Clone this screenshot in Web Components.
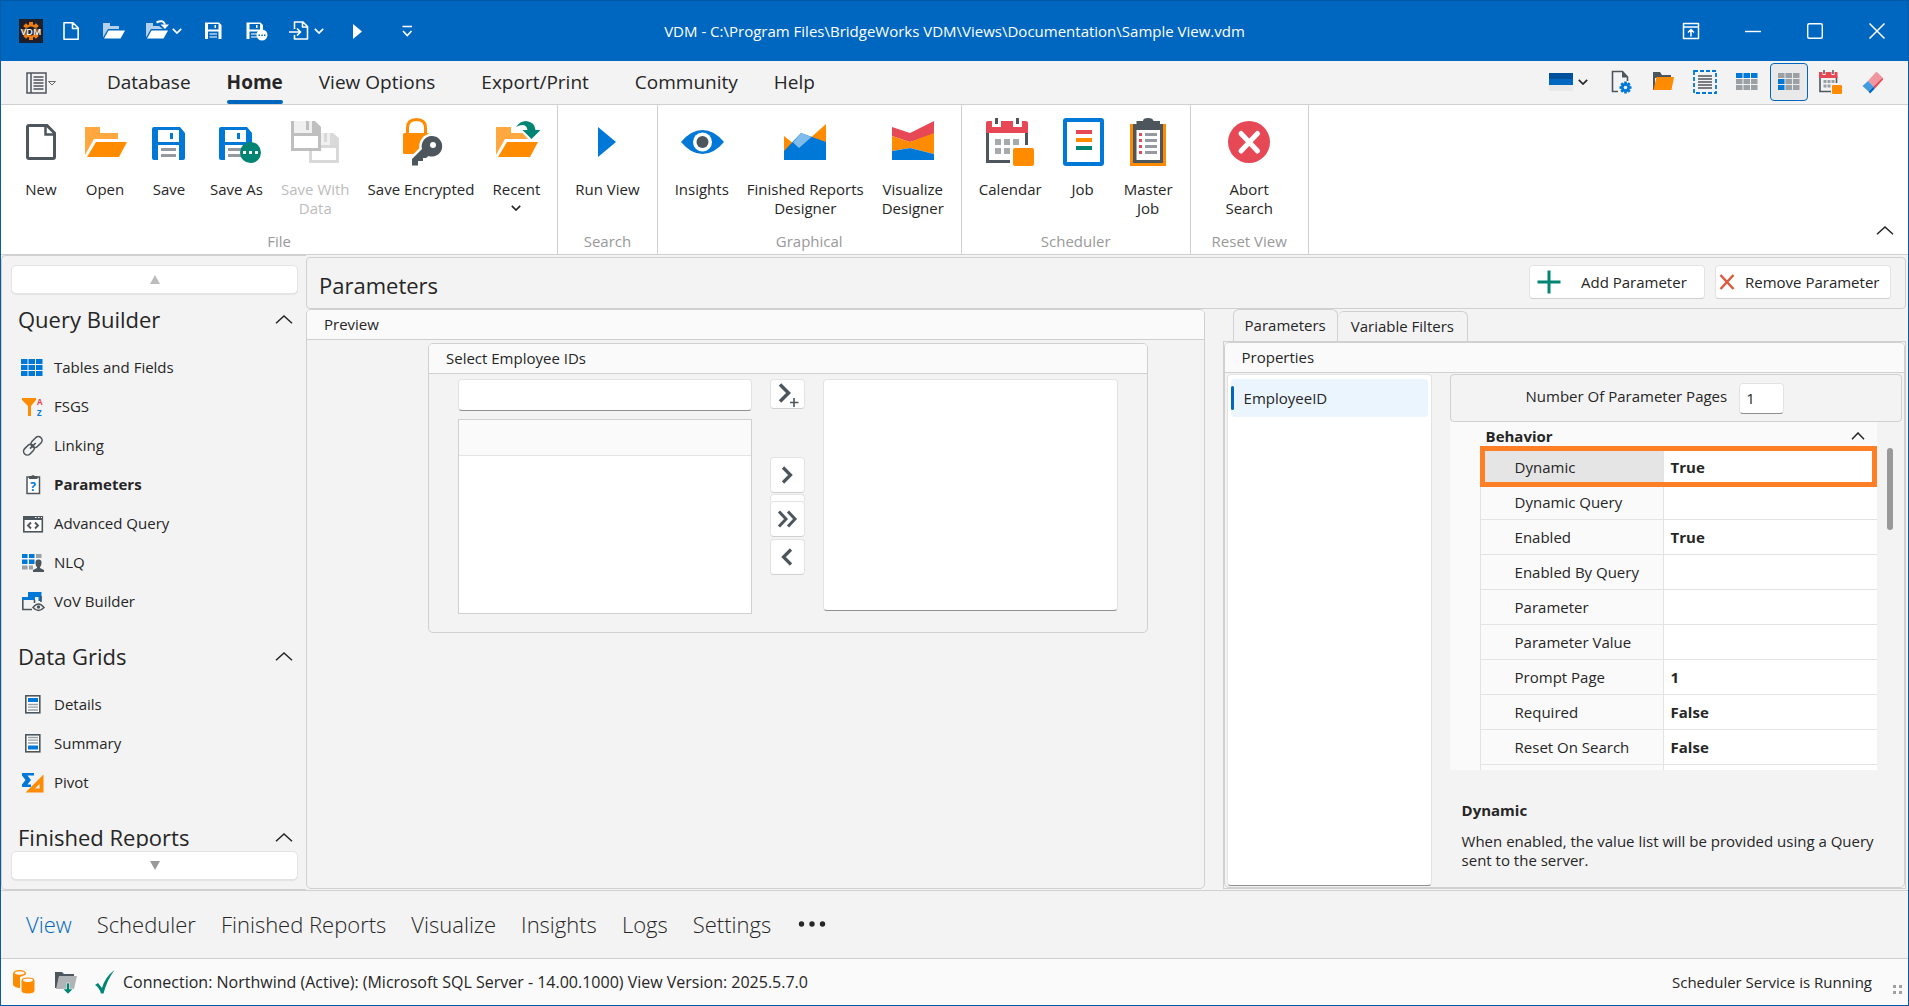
<!DOCTYPE html>
<html lang="en">
<head>
<meta charset="utf-8">
<title>VDM - Sample View</title>
<style>
html,body{margin:0;height:100%}
body{font-family:"Open Sans","Noto Sans",sans-serif;font-size:15px;line-height:19px;color:#262626;background:#f3f3f3;
--accent:#0067c0;--line:#d0d0d0;--soft:#e3e3e3;--panel:#f3f3f3;--head:#fafafa}
</style>
</head>
<body>
<vdm-app></vdm-app>
<script>
const RESET = `*{box-sizing:border-box}button,input,textarea{font:inherit;color:inherit;margin:0}button{background:none;border:0;padding:0}a{color:inherit;text-decoration:none}h1,h2,h3,p,ul{margin:0;padding:0;font-weight:inherit;font-size:inherit}ul{list-style:none}`;
const define = (name, css, html) => customElements.define(name, class extends HTMLElement {
  connectedCallback() {
    if (this.shadowRoot) return;
    const root = this.attachShadow({ mode: 'open' });
    root.innerHTML = `<style>${RESET}${css}</style>` + (typeof html === 'function' ? html(this) : html);
  }
});

/* ---------- icons: [viewBox width, height, markup] ---------- */
const D = '#4d565c', B = '#0078d7', O = '#ff8c00', G = '#008575', R = '#e74856', GR = '#9aa0a4';
const disk = (c = B, bar = '#949a9f') => `<path fill="${c}" d="M3 0H28L33 6V31Q33 33 31 33H27V18H6V33H2Q0 33 0 31V2Q0 0 2 0Z"/><path fill="#fff" d="M6 3H27V15H6Z"/><path fill="${c}" d="M18 6H21V12H18Z"/><path fill="${bar}" d="M9 21H24V24H9ZM9 27H24V30H9Z"/>`;
const folder = `<path fill="#ffa840" d="M4 9H19V15H37V21H13L4 37Z"/><path fill="${O}" d="M15 24H46L38 39H6Z"/>`;
const cells = f => [0,1,2].map(r => [0,1,2].map(c => `<rect x="${c*7.5}" y="${r*6}" width="6.5" height="5" fill="${f(r,c)}"/>`).join('')).join('');
const gear = (cx, cy, r, c, hole) => `<g transform="translate(${cx} ${cy})" fill="${c}">${[0,45,90,135].map(a => `<rect x="${-r*.22}" y="${-r}" width="${r*.44}" height="${2*r}" transform="rotate(${a})"/>`).join('')}<circle r="${r*.74}"/><circle r="${r*.3}" fill="${hole}"/></g>`;
const ICONS = {
  logo: [24,24,`<rect width="24" height="24" fill="#1d1f2b"/>${gear(12,12,9,'#f07f13','#1d1f2b')}<circle cx="12" cy="12" r="4.500" fill="#1d1f2b"/><rect x="1" y="8.500" width="22" height="7" fill="#1d1f2b" opacity=".45"/><text x="12" y="15.500" font-family="Open Sans" font-size="9" font-weight="600" fill="#fff" text-anchor="middle">VDM</text>`],
  tNew: [24,24,`<path d="M5 3.800H14L19.200 9V20.200H5ZM13.500 4V9.500H19" fill="none" stroke="#fff" stroke-width="1.600" stroke-linejoin="round"/>`],
  tOpen: [24,24,`<path d="M1 4H8V7H17V10H6L1 18.500Z" fill="#b3d1ec"/><path d="M6.500 11.500H23L18.500 19.500H2Z" fill="#fff"/>`],
  tRecent: [24,24,`<path d="M1 4H8V7H14L18 10H6L1 18.500Z" fill="#b3d1ec"/><path d="M6.500 11.500H23L18.500 19.500H2Z" fill="#fff"/><path d="M11.500 3.500Q18 0 20 5.500" fill="none" stroke="#fff" stroke-width="2"/><path d="M15.500 5.500H24L20 10Z" fill="#fff"/>`],
  tSave: [24,24,`<path fill="#fff" fill-rule="evenodd" d="M4 3.500H18L20.500 6V20H17.500V12.500H7V20H4ZM7 5V10.500H17.500V5ZM13.500 6H15V9H13.500Z"/><path stroke="#b3d1ec" stroke-width="1.500" d="M8.500 15H16M8.500 18H16"/>`],
  tSaveAs: [24,24,`<g transform="translate(-1.500)"><path fill="#fff" fill-rule="evenodd" d="M4 3.500H18L20.500 6V20H17.500V12.500H7V20H4ZM7 5V10.500H17.500V5ZM13.500 6H15V9H13.500Z"/><path stroke="#b3d1ec" stroke-width="1.500" d="M8.500 15H16M8.500 18H16"/></g><circle cx="18" cy="16" r="5.500" fill="#fff"/><path d="M14.500 15.500h1.500v1.500h-1.500zM17.300 15.500h1.500v1.500h-1.500zM20 15.500h1.500v1.500h-1.500z" fill="#0067c0"/>`],
  tImport: [24,24,`<path d="M7.500 10V3H16L20.500 7.500V20H7.500V16M15.500 3V8H20.500" fill="none" stroke="#fff" stroke-width="1.600" stroke-linejoin="round"/><path d="M2 13H13M10 9.500L13.500 13L10 16.500" fill="none" stroke="#fff" stroke-width="1.600"/>`],
  tPlay: [24,24,`<path d="M10 5L19 12.500L10 20Z" fill="#fff"/>`],
  tMore: [12,12,`<path d="M1.500 1.500H11M2 6L6.250 10.500L10.500 6" fill="none" stroke="#fff" stroke-width="1.600"/>`],
  pin: [18,18,`<path d="M1.500 1.500H16.500V16.500H1.500ZM1.500 5H16.500M9 14.500V8M6 10.500L9 7.500L12 10.500" fill="none" stroke="#fff" stroke-width="1.500" stroke-linejoin="round"/>`],
  min: [18,18,`<path d="M1 9.500H17" stroke="#fff" stroke-width="1.400"/>`],
  max: [18,18,`<rect x="1.700" y="1.700" width="14.600" height="14.600" rx="1.500" fill="none" stroke="#fff" stroke-width="1.400"/>`],
  close: [18,18,`<path d="M1.500 1.500L16.500 16.500M16.500 1.500L1.500 16.500" stroke="#fff" stroke-width="1.500"/>`],
  chev: [10,6,`<path d="M.8 .8L5 5L9.200 .8" fill="none" stroke="currentColor" stroke-width="1.700"/>`],
  up: [18,9,`<path d="M1 8.300L9 1L17 8.300" fill="none" stroke="currentColor" stroke-width="1.500"/>`],
  triUp: [10,9,`<path d="M5 0L10 9H0Z" fill="#bcbcbc"/>`],
  triDown: [10,9,`<path d="M5 9L10 0H0Z" fill="#999"/>`],
  appMenu: [32,24,`<path d="M1 2H20V22H1ZM5 2V22" fill="none" stroke="${D}" stroke-width="1.500"/><path d="M7.500 6H17.500M7.500 9H17.500M7.500 12H17.500M7.500 15H17.500M7.500 18H17.500" stroke="${D}" stroke-width="1.400"/><path d="M22.500 10.500H29.500L26 14Z" fill="none" stroke="#6a6a6a"/>`],
  swatch: [24,18,`<rect width="24" height="6" fill="#00519c"/><rect y="6" width="24" height="6" fill="#0067c0"/><rect y="12" width="24" height="6" fill="#e9e9e9"/>`],
  pageGear: [24,24,`<path d="M9 21.500H3.500V1.500H13.500L18.500 7V11" fill="none" stroke="${D}" stroke-width="1.600"/><path d="M13 1L19 7.500H13Z" fill="${D}"/>${gear(16.5,17.5,6,B,'#f3f3f3')}`],
  miniFolder: [24,24,`<path d="M2 2H9L11 5H20V8H4V20H2Z" fill="${D}"/><path d="M5.500 7H23L20.500 20H2.500Z" fill="${O}"/>`],
  selList: [24,24,`<rect x="1" y="1" width="22" height="22" fill="none" stroke="${B}" stroke-width="1.800" stroke-dasharray="4 2"/><path d="M5 6H19M5 9H19M5 12H19M5 15H19M5 18H19" stroke="${D}" stroke-width="1.700"/>`],
  gridTop: [22,17,cells(r => r ? GR : B)],
  gridLeft: [22,17,cells((r,c) => !c && r ? B : GR)],
  tables: [22,17,cells(() => B)],
  calSmall: [24,24,`<path d="M1 6V21.500H12M17.500 6V13" fill="none" stroke="${D}" stroke-width="1.600"/><path d="M0 2H3.500V5H6.500V2H12.500V5H15.500V2H18.500V8H0Z" fill="${R}"/><path d="M5 0V4M14 0V4" stroke="${D}" stroke-width="1.500"/><path d="M4.500 10H7.500V13H4.500ZM8.500 10H11.500V13H8.500ZM12.500 10H15.500V13H12.500ZM4.500 14.500H7.500V17.500H4.500ZM8.500 14.500H11.500V17.500H8.500Z" fill="${GR}"/><rect x="13" y="15" width="10" height="9" rx="1" fill="${O}"/>`],
  eraser: [24,24,`<path d="M7 11L14.500 2.500Q15.500 1.500 16.500 2.500L21.500 7.500L12.500 16.500Z" fill="#f195a0"/><path d="M12.500 16.500L21.500 7.500L22 9.500L13.500 19Z" fill="${R}"/><path d="M7 11L12.500 16.500L7.500 21.500L1.500 16Z" fill="#429bdf"/><path d="M12.500 16.500L13.500 19L9 23.500L7.500 21.500Z" fill="#0067c0"/>`],
  new: [48,48,`<path d="M12 7.500H30L37.500 15V39Q37.500 40.500 36 40.500H12Q10.500 40.500 10.500 39V9Q10.500 7.500 12 7.500Z" fill="#fff" stroke="${D}" stroke-width="3"/><path d="M28.500 7V16.500H38" fill="none" stroke="${D}" stroke-width="2.500"/>`],
  open: [48,48,folder],
  save: [48,48,`<g transform="translate(7 9)">${disk()}</g>`],
  saveAs: [48,48,`<g transform="translate(6 9)">${disk()}</g><circle cx="37.500" cy="34.500" r="10.500" fill="${G}"/><path fill="#fff" d="M30 33h3v3h-3zM36 33h3v3h-3zM42 33h3v3h-3z"/>`],
  saveData: [48,48,`<path fill="#d9d9d9" d="M18 15H42L48 20V45H18Z"/><path fill="#f0f0f0" d="M21 15H39V27H21Z"/><path fill="#d9d9d9" d="M33 15H36V24H33Z"/><path fill="#fff" d="M21 30H45V42H21Z"/><path fill="#bfbfbf" d="M0 3H24L30 9V33H0Z"/><path fill="#f0f0f0" d="M3 3H21V15H3Z"/><path fill="#bfbfbf" d="M15 3H18V12H15Z"/><path fill="#fff" d="M3 18H27V30H3Z"/>`],
  encrypt: [48,48,`<path d="M10.500 16V10Q10.500 1.500 19.500 1.500T28.500 10V16" fill="none" stroke="${O}" stroke-width="3"/><rect x="6" y="15" width="26" height="21" rx="1.500" fill="${O}"/><path d="M34.500 18A10.300 10.300 0 1 1 31.500 38L29 40H26V43H21V47.500H15V41L25 31A10.300 10.300 0 0 1 34.500 18Z" fill="${D}" stroke="#fff" stroke-width="5"/><path d="M34.500 18A10.300 10.300 0 1 1 31.500 38L29 40H26V43H21V47.500H15V41L25 31A10.300 10.300 0 0 1 34.500 18Z" fill="${D}"/><circle cx="36" cy="27" r="3" fill="#fff"/>`],
  recent: [48,48,`${folder}<path d="M23 10Q36 -2 41 13L48 12L39 22L30 12Z" fill="#fff" stroke="#fff" stroke-width="3"/><path d="M24 9Q28 3 34 3Q43 4 43.500 12H48.500L39.500 21L30.500 12H35.500Q34 4 24 9Z" fill="${G}"/>`],
  run: [48,48,`<path d="M15 9L33 24L15 39Z" fill="${B}"/>`],
  insights: [48,48,`<path d="M3 24Q13 12 24.500 12T46 24Q36 36 24.500 36T3 24Z" fill="${B}"/><circle cx="24.500" cy="24" r="9.500" fill="#fff"/><circle cx="24.500" cy="24" r="6" fill="${D}"/>`],
  reports: [48,48,`<path d="M3 18L18 30L45 6V42H3Z" fill="${O}"/><path d="M3 33L20 15L45 24V42H3Z" fill="${B}"/><path d="M20 15L12 24.500L18 30L30.500 19Z" fill="#80bceb"/>`],
  visualize: [48,48,`<path d="M3 9L21 15L45 3V16L21 24L3 18Z" fill="${R}"/><path d="M3 18L21 24L45 15V36L21 30L3 33Z" fill="${O}"/><path d="M3 33L21 30L45 36V42H3Z" fill="${B}"/>`],
  calendar: [48,48,`<path d="M1.500 14V43.500H24M40.500 14V27" fill="none" stroke="${D}" stroke-width="3"/><path d="M0 5Q0 3 2 3H6V9H15V3H27V9H36V3H40Q42 3 42 5V15H0Z" fill="${R}"/><path d="M10.500 0V6M31.500 0V6" stroke="${D}" stroke-width="3"/><path d="M9 21H15V27H9ZM18 21H24V27H18ZM27 21H33V27H27ZM9 30H15V36H9ZM18 30H24V36H18Z" fill="#a6aaad"/><rect x="27" y="30" width="21" height="18" rx="2" fill="${O}"/>`],
  job: [48,48,`<rect x="6" y="2" width="37" height="44" rx="1" fill="#fff" stroke="${B}" stroke-width="4"/><path d="M17 14H33" stroke="${R}" stroke-width="4"/><path d="M17 22H33" stroke="${O}" stroke-width="4"/><path d="M17 30H33" stroke="${G}" stroke-width="4"/>`],
  master: [48,48,`<path d="M6 6H42V48H6Z" fill="${O}"/><path d="M9 6H39V45H9Z" fill="${D}"/><path d="M12.500 12H36V42H12.500Z" fill="#fff"/><path d="M12.500 3H19Q19 0 24 0T29.500 3H36V12H12.500Z" fill="${D}"/><path d="M15 15h3v3h-3zM15 21h3v3h-3zM15 27h3v3h-3zM15 33h3v3h-3z" fill="${R}"/><path d="M21 15h12v3H21zM21 21h12v3H21zM21 27h12v3H21zM21 33h12v3H21z" fill="#949a9f"/>`],
  abort: [48,48,`<circle cx="24" cy="24" r="21" fill="${R}"/><path d="M16 15.500L32.500 33M32.500 15.500L16 33" stroke="#fff" stroke-width="5" stroke-linecap="round"/>`],
  fsgs: [24,24,`<path d="M1 3H15V5L10 11V21H7V11L1 5Z" fill="${O}"/><text x="16" y="10" font-family="Open Sans" font-size="8" font-weight="700" fill="${R}">A</text><text x="16" y="21" font-family="Open Sans" font-size="8" font-weight="700" fill="${B}">Z</text>`],
  link: [24,24,`<g fill="none" stroke="${D}" stroke-width="1.600" transform="rotate(-45 12 12)"><rect x="0.500" y="8" width="12" height="7.500" rx="3.750"/><rect x="11" y="8" width="12.500" height="7.500" rx="3.750"/><path d="M8 11.750H16"/></g>`],
  param: [24,24,`<rect x="6" y="4" width="12.500" height="16.500" fill="#fff" stroke="${D}" stroke-width="1.500"/><path d="M8 3H10L12 2L14 3H16.500V6H8Z" fill="${D}"/><text x="12.200" y="17.500" text-anchor="middle" font-family="Open Sans" font-size="12" font-weight="700" fill="${B}">?</text>`],
  advanced: [24,24,`<rect x="2.800" y="4.800" width="18.500" height="15" fill="#fff" stroke="${D}" stroke-width="1.600"/><path d="M2 4H22V8H2Z" fill="${D}"/><path d="M14 5.500h1.500M17 5.500h1.500M20 5.500h1" stroke="#fff"/><path d="M10 10.500L7 13.500L10 16.500M14 10.500L17 13.500L14 16.500" fill="none" stroke="${D}" stroke-width="1.900"/>`],
  nlq: [24,24,`<path fill="${B}" d="M1 3H6.500V7H1ZM8 3H13.500V7H8ZM1 8.500H6.500V13H1ZM8 8.500H13.500V13H8Z"/><path fill="${GR}" d="M15 3H20.500V7H15ZM1 14.500H6.500V18.500H1ZM8 14.500H12V18.500H8Z"/><path fill="${D}" d="M17.500 8.500Q21 8.500 20.500 12.500Q20 15.500 19 16L19 17L23 19V21H12V19L16 17V16Q14.800 15.500 14.500 12.500Q14 8.500 17.500 8.500Z"/>`],
  vov: [24,24,`<path d="M7 2H20.500V11H17.500V7H7Z" fill="${B}"/><path d="M1 7H14V10H1Z" fill="${B}"/><path d="M1.800 10V19.500H11M20 6V12M13.500 10V13" fill="none" stroke="${D}" stroke-width="1.600"/><path d="M12 17.500Q17.500 10.500 23 17.500Q17.500 23.500 12 17.500Z" fill="#f3f3f3" stroke="${D}" stroke-width="1.500"/><circle cx="17.500" cy="17" r="1.700" fill="${D}"/>`],
  details: [24,24,`<rect x="4.800" y="2.800" width="14" height="17" fill="#fff" stroke="${D}" stroke-width="1.600"/><path d="M7 5H17V9H7Z" fill="${B}"/><path d="M7 11.500H17M7 14.200H17M7 17H17" stroke="${GR}" stroke-width="1.300"/>`],
  summary: [24,24,`<rect x="4.800" y="2.800" width="14" height="17" fill="#fff" stroke="${D}" stroke-width="1.600"/><path d="M7 13.500H17V17.500H7Z" fill="${B}"/><path d="M7 5.500H17M7 8.200H17M7 11H17" stroke="${GR}" stroke-width="1.300"/>`],
  pivot: [24,24,`<path d="M1 2H13V4.500H6.500L10 9L6.500 13.500H10V16H1V13.500L4.500 9L1 4.500Z" fill="${B}"/><path fill="${O}" fill-rule="evenodd" d="M22.500 3.500V21.500H4.500ZM18.500 13L14 17.500H18.500Z"/>`],
  plus: [24,24,`<path d="M12 .5V23.500M.5 12H23.500" stroke="${G}" stroke-width="3"/>`],
  cross: [16,16,`<path d="M1.500 1L14.500 15M14.500 1L1.500 15" stroke="#dc5a3c" stroke-width="2.500"/>`],
  addOne: [24,28,`<path d="M4 4.500L12.500 13L4 21.500" fill="none" stroke="${D}" stroke-width="3.500"/><path d="M18 18V27M14 22.500H22.500" stroke="${D}" stroke-width="1.600"/>`],
  next: [20,20,`<path d="M5 2.500L12.500 10L5 17.500" fill="none" stroke="${D}" stroke-width="3.200"/>`],
  all: [24,20,`<path d="M3 2.500L10 10L3 17.500M12 2.500L19 10L12 17.500" fill="none" stroke="${D}" stroke-width="3"/>`],
  prev: [20,20,`<path d="M13 2.500L5.500 10L13 17.500" fill="none" stroke="${D}" stroke-width="3.200"/>`],
  dots: [28,8,`<circle cx="3.500" cy="4" r="2.700" fill="#262626"/><circle cx="14" cy="4" r="2.700" fill="#262626"/><circle cx="24.500" cy="4" r="2.700" fill="#262626"/>`],
  db: [24,26,`<g fill="${O}"><path d="M1 4V16Q3 19 8 19V8Q14 6 14 5V4Q13 1 7.500 1T1 4Z"/><path d="M9 11V22Q10 25 16 25T23 22V11Q22 8 16 8T9 11Z" stroke="#fafafa"/></g><ellipse cx="7.500" cy="4" rx="5" ry="1.700" fill="#fafafa"/><ellipse cx="16" cy="11.200" rx="5" ry="1.700" fill="#fafafa"/>`],
  folderDown: [24,26,`<path d="M1 3H8L10 5H20V8H5L3 19H1Z" fill="${D}"/><path d="M5 7H23L20 20H2Z" fill="#b0b4b7"/><path d="M12.500 14H15.500V20H19L14 25L9 20H12.500Z" fill="${G}" stroke="#fafafa" stroke-width=".6"/>`],
  check: [22,26,`<path d="M1 16L4 14L8 19Q11 8 20.500 1Q13 11 9.500 24.500H7Q5 18 1 16Z" fill="${G}"/>`],
  grip: [12,12,`<path d="M1 3h3v3H1zM7 3h3v3H7zM1 9h3v3H1zM7 9h3v3H7z" fill="#a0a0a0"/>`]
};
define('ui-icon', ':host{display:block;flex:none}svg{display:block}', el => {
  const [w, h, body] = ICONS[el.getAttribute('name')];
  return `<svg width="${w}" height="${h}" viewBox="0 0 ${w} ${h}" aria-hidden="true">${body}</svg>`;
});
const icon = n => `<ui-icon name="${n}"></ui-icon>`;

/* ---------- title bar ---------- */
define('title-bar', `
:host{display:grid;grid-template-columns:1fr auto 1fr;align-items:center;height:61px;background:var(--accent);color:#fff;border-top:1px solid #005aa8}
.quick{display:flex;align-items:center;gap:1px;padding-left:18px}
.quick ui-icon[name=logo]{margin-right:6px}
.quick button{display:flex;align-items:center;gap:3px;padding:0 9px;height:38px}
.quick .more{margin-left:9px;padding:0 15px}
h1{white-space:nowrap}
.win{display:flex;justify-content:flex-end}
.win button{width:62px;height:60px;display:grid;place-items:center}`,
`<div class="quick">${icon('logo')}
<button aria-label="New">${icon('tNew')}</button><button aria-label="Open">${icon('tOpen')}</button>
<button aria-label="Recent">${icon('tRecent')}${icon('chev')}</button><button aria-label="Save">${icon('tSave')}</button>
<button aria-label="Save As">${icon('tSaveAs')}</button><button aria-label="Import">${icon('tImport')}${icon('chev')}</button>
<button aria-label="Run">${icon('tPlay')}</button><button class="more" aria-label="Customize">${icon('tMore')}</button></div>
<h1>VDM - C:\\Program Files\\BridgeWorks VDM\\Views\\Documentation\\Sample View.vdm</h1>
<div class="win">${['pin','min','max','close'].map(n => `<button aria-label="${n}">${icon(n)}</button>`).join('')}</div>`);

/* ---------- menu bar ---------- */
define('menu-bar', `
:host{display:flex;align-items:stretch;height:44px;border-bottom:1px solid var(--line);padding:0 16px 0 25px}
.app{display:flex;align-items:center;margin-right:49px}
nav{display:flex;gap:36px;font-size:19px;line-height:26px;flex:1}
nav a{display:flex;align-items:center;border-bottom:4px solid transparent;padding-top:3px}
nav a.on{font-weight:700;position:relative}
nav a.on::after{content:"";position:absolute;left:0;right:0;bottom:-4px;height:4px;border-radius:2px;background:var(--accent)}
nav a.wide{margin-left:10px}
.tools{display:flex;gap:4px;align-items:center;padding-bottom:2px}
.tools button{width:38px;height:38px;display:grid;place-items:center;border-radius:4px;border:1px solid transparent}
.tools .on{background:#e9e9e9;border-color:var(--accent)}
.tools .skin{width:auto;display:flex;align-items:center;gap:5px;margin-right:9px}`,
`<button class="app" aria-label="Application menu">${icon('appMenu')}</button>
<nav><a href="#">Database</a><a href="#" class="on">Home</a><a href="#">View Options</a><a href="#" class="wide">Export/Print</a><a href="#" class="wide">Community</a><a href="#">Help</a></nav>
<div class="tools"><button class="skin" aria-label="Skin">${icon('swatch')}${icon('chev')}</button>
${['pageGear','miniFolder','selList','gridTop','gridLeft','calSmall','eraser'].map(n => `<button aria-label="${n}" class="${n === 'gridLeft' ? 'on' : ''}">${icon(n)}</button>`).join('')}</div>`);

/* ---------- ribbon ---------- */
define('ribbon-button', `
:host{display:block}
button{display:flex;flex-direction:column;align-items:center;min-width:64px;padding:13px 8px 0;white-space:pre-line;text-align:center}
.label{margin-top:14px;padding:0 1px}
ui-icon[name=chev]{margin-top:6px}
:host([disabled]) button{color:#bcbcbc}`,
el => `<button${el.hasAttribute('disabled') ? ' disabled' : ''}>${icon(el.getAttribute('icon'))}<span class="label"><slot></slot></span>${el.hasAttribute('drop') ? icon('chev') : ''}</button>`);
define('ribbon-group', `
:host{display:flex;flex-direction:column;border-right:1px solid var(--line);padding:0 8px}
.items{display:flex;justify-content:center;height:127px}
.cap{text-align:center;color:#999;padding:0 13px}`,
el => `<div class="items"><slot></slot></div><div class="cap">${el.getAttribute('caption')}</div>`);
const rb = (i, t, extra = '') => `<ribbon-button icon="${i}" ${extra}>${t}</ribbon-button>`;
define('ribbon-bar', `
:host{display:flex;height:149px;background:#fff}
.fold{margin:auto 14px 19px auto}`,
`<ribbon-group caption="File">${rb('new','New')}${rb('open','Open')}${rb('save','Save')}${rb('saveAs','Save As')}${rb('saveData','Save With\nData','disabled')}${rb('encrypt','Save Encrypted')}${rb('recent','Recent','drop')}</ribbon-group>
<ribbon-group caption="Search">${rb('run','Run View')}</ribbon-group>
<ribbon-group caption="Graphical">${rb('insights','Insights')}${rb('reports','Finished Reports\nDesigner')}${rb('visualize','Visualize\nDesigner')}</ribbon-group>
<ribbon-group caption="Scheduler">${rb('calendar','Calendar')}${rb('job','Job')}${rb('master','Master\nJob')}</ribbon-group>
<ribbon-group caption="Reset View">${rb('abort','Abort\nSearch')}</ribbon-group>
<button class="fold" aria-label="Collapse ribbon">${icon('up')}</button>`);

/* ---------- side navigation ---------- */
define('nav-section', `
:host{display:block;padding-bottom:12px}
h2{display:flex;justify-content:space-between;align-items:center;height:46px;padding:0 5px 0 7px;font-size:22px;line-height:30px;margin-bottom:6px}`,
el => `<h2>${el.getAttribute('heading')}${icon('up')}</h2><slot></slot>`);
define('nav-item', `
:host{display:block}
a{display:flex;align-items:center;gap:9px;height:39px;padding-left:10px}
ui-icon{width:24px}
:host([current]) a{font-weight:700}`,
el => `<a href="#">${icon(el.getAttribute('icon'))}<slot></slot></a>`);
const ni = (i, t, x = '') => `<nav-item icon="${i}" ${x}>${t}</nav-item>`;
define('side-nav', `
:host{display:flex;flex-direction:column;width:305px;flex:none;padding:9px 8px 9px 9px;border:1px solid var(--line);border-right:0;border-radius:5px 0 0 5px}
.scroll{height:29px;flex:none;background:#fff;border:1px solid var(--soft);border-radius:5px;display:grid;place-items:center;box-shadow:0 1px 1px #0001}
nav{flex:1;min-height:0;overflow:hidden;margin:2px 0 3px}`,
`<button class="scroll" aria-label="Scroll up">${icon('triUp')}</button>
<nav><nav-section heading="Query Builder">${ni('tables','Tables and Fields')}${ni('fsgs','FSGS')}${ni('link','Linking')}${ni('param','Parameters','current')}${ni('advanced','Advanced Query')}${ni('nlq','NLQ')}${ni('vov','VoV Builder')}</nav-section>
<nav-section heading="Data Grids">${ni('details','Details')}${ni('summary','Summary')}${ni('pivot','Pivot')}</nav-section>
<nav-section heading="Finished Reports"></nav-section></nav>
<button class="scroll" aria-label="Scroll down">${icon('triDown')}</button>`);

/* ---------- parameters page ---------- */
define('page-header', `
:host{display:flex;align-items:center;gap:10px;height:52px;border:1px solid var(--line);border-radius:4px;padding:0 14px 2px 12px}
h2{font-size:22px;line-height:30px;padding-top:6px;flex:1}
button{display:flex;align-items:center;width:176px;height:34px;background:#fff;border:1px solid var(--soft);border-bottom-color:#cfcfcf;border-radius:4px}
.add{padding:0 7px;gap:20px}.del{padding:0 3px;gap:10px}`,
`<h2>Parameters</h2><button class="add">${icon('plus')}<span>Add Parameter</span></button><button class="del">${icon('cross')}<span>Remove Parameter</span></button>`);

define('group-box', `
:host{display:flex;flex-direction:column;border:1px solid var(--line);border-radius:5px;overflow:hidden;background:var(--panel)}
h3{background:var(--head);border-bottom:1px solid var(--line);height:30px;flex:none;display:flex;align-items:center;padding-left:17px}
.body{flex:1;min-height:0;display:flex;flex-direction:column}`,
el => `<h3>${el.getAttribute('heading')}</h3><div class="body"><slot></slot></div>`);

define('id-picker', `
:host{display:grid;grid-template-columns:1fr 35px 1fr;gap:18px;padding:5px 29px 18px;height:258px}
.left{display:flex;flex-direction:column;gap:8px}
input,textarea{display:block;width:100%;border:1px solid var(--soft);border-bottom-color:#8f8f8f;border-radius:4px;background:#fff;padding:0 8px;outline:0;resize:none}
input{height:32px}textarea{height:232px}
.list{flex:1;background:#fff;border:1px solid var(--line)}
.list div{height:36px;background:var(--head);border-bottom:1px solid var(--soft)}
.mid{display:flex;flex-direction:column}
.mid button{height:36px;background:#fff;border:1px solid var(--soft);border-bottom-color:#cfcfcf;border-radius:4px;display:grid;place-items:center}
.mid .one{height:30px;margin-bottom:48px}
.mid .sliver{height:7px;margin-top:1px;border-bottom:0;border-radius:4px 4px 0 0}
.mid .back{margin-top:2px}`,
`<div class="left"><input aria-label="Employee ID"><div class="list"><div></div></div></div>
<div class="mid"><button class="one" aria-label="Add typed value">${icon('addOne')}</button><button aria-label="Add">${icon('next')}</button><button class="sliver" aria-label="Add range"></button><button aria-label="Add all">${icon('all')}</button><button class="back" aria-label="Remove">${icon('prev')}</button></div>
<textarea aria-label="Selected IDs"></textarea>`);

define('property-grid', `
:host{display:flex;height:348px;padding-right:9px}
.view{flex:1;height:348px;overflow:hidden;background:var(--head);padding-left:30px}
.cat{display:flex;justify-content:space-between;align-items:center;height:28px;padding:0 12px 0 6px;font-weight:700}
.cat svg{display:block}
table{border-collapse:separate;border-spacing:0;width:100%;table-layout:fixed}
th,td{height:35px;padding:0;text-align:left;border-bottom:1px solid var(--soft)}
th{width:184px;font-weight:400;padding-left:34px;border-left:1px solid var(--soft);border-right:1px solid var(--soft)}
td{background:#fff;font-weight:700;padding-left:7px}
.sel th{background:#e5e5e5}
.rows{position:relative}
.rows::after{content:"";position:absolute;left:0;right:0;top:-4px;height:41px;box-sizing:border-box;border:5px solid #ff7f27;pointer-events:none}
.bar{width:6px;height:82px;border-radius:3px;background:#999;margin:26px 0 0 10px}`,
`<div class="view"><div class="cat">Behavior<svg width="14" height="8" viewBox="0 0 14 8"><path d="M1 7.300L7 1L13 7.300" fill="none" stroke="#262626" stroke-width="1.500"/></svg></div>
<div class="rows"><table>${[['Dynamic','True'],['Dynamic Query',''],['Enabled','True'],['Enabled By Query',''],['Parameter',''],['Parameter Value',''],['Prompt Page','1'],['Required','False'],['Reset On Search','False'],['','']].map(([k,v],i) => `<tr class="${i ? '' : 'sel'}"><th scope="row">${k}</th><td>${v}</td></tr>`).join('')}</table></div></div><div class="bar"></div>`);

define('property-panel', `
:host{display:flex;flex-direction:column;min-height:0}
.tabs{display:flex;align-items:flex-end;height:32px;padding-left:10px}
.tabs button{height:30px;padding:0 13px;border:1px solid var(--line);border-bottom:0;border-left:0;border-radius:6px 6px 0 0;white-space:nowrap}
.tabs .on{height:32px;padding:0 11px;border-left:1px solid var(--line)}
.frame{flex:1;min-height:0;border:1px solid var(--line);display:flex}
group-box{flex:1;min-width:0}
.cols{flex:1;display:flex;gap:18px;padding:1px 2px 1px}
.names{width:205px;flex:none;background:#fff;border:1px solid var(--soft);border-bottom-color:#8f8f8f;border-radius:4px;padding:4px 3px}
.names li{height:38px;display:flex;align-items:center;background:#eaf5fe;border-radius:4px;gap:10px}
.names li::before{content:"";width:3px;height:24px;border-radius:2px;background:var(--accent)}
.right{flex:1;min-width:0}
.pages{display:flex;align-items:center;justify-content:flex-start;gap:12px;height:48px;border:1px solid var(--line);border-radius:4px;padding-left:75px}
.pages label{padding-bottom:4px}
.pages input{width:45px;height:31px;border:1px solid var(--soft);border-bottom-color:#8f8f8f;border-radius:4px;background:#fff;padding:0 6px}
.help{padding:31px 0 0 12px}
.help h3{font-weight:700;margin-bottom:12px}`,
`<div class="tabs"><button class="on">Parameters</button><button>Variable Filters</button></div>
<div class="frame"><group-box heading="Properties"><div class="cols"><ul class="names"><li>EmployeeID</li></ul>
<div class="right"><div class="pages"><label for="n">Number Of Parameter Pages</label><input id="n" value="1"></div><property-grid></property-grid>
<div class="help"><h3>Dynamic</h3><p>When enabled, the value list will be provided using a Query sent to the server.</p></div></div></div></group-box></div>`);

define('param-page', `
:host{display:flex;flex-direction:column;flex:1;min-width:0;padding:2px 2px 1px 0}
.split{flex:1;min-height:0;display:grid;grid-template-columns:minmax(0,898fr) minmax(0,683fr);gap:18px}
id-picker{flex:none}
.inner{margin:3px 56px 0 121px}`,
`<page-header></page-header><div class="split"><group-box heading="Preview"><group-box class="inner" heading="Select Employee IDs"><id-picker></id-picker></group-box></group-box><property-panel></property-panel></div>`);

/* ---------- bottom bars ---------- */
define('view-tabs', `
:host{display:flex;align-items:center;gap:25px;height:68px;padding:0 25px 2px;font-size:22px;line-height:30px;font-weight:300;border-bottom:1px solid var(--line)}
.on{color:var(--accent)}button{margin-left:2px}`,
`${['View','Scheduler','Finished Reports','Visualize','Insights','Logs','Settings'].map((t,i) => `<a href="#" class="${i ? '' : 'on'}">${t}</a>`).join('')}<button aria-label="More">${icon('dots')}</button>`);
define('status-bar', `
:host{display:flex;align-items:center;height:46px;padding:0 4px 0 11px;background:var(--head)}
.state{font-size:16px;flex:1;margin-left:7px}
ui-icon[name=folderDown]{margin:0 16px 0 18px}
ui-icon[name=grip]{margin:12px 0 0 20px}`,
`${icon('db')}${icon('folderDown')}${icon('check')}<span class="state">Connection: Northwind (Active): (Microsoft SQL Server - 14.00.1000) View Version: 2025.5.7.0</span><span>Scheduler Service is Running</span>${icon('grip')}`);

define('vdm-app', `
:host{display:flex;flex-direction:column;box-sizing:border-box;height:100vh;min-height:960px;border:1px solid #0a5aa5;border-top:0;background:var(--panel);overflow:hidden}
main{flex:1;min-height:0;display:flex;border:solid var(--line);border-width:1px 0}`,
`<title-bar></title-bar><menu-bar></menu-bar><ribbon-bar></ribbon-bar><main><side-nav></side-nav><param-page></param-page></main><view-tabs></view-tabs><status-bar></status-bar>`);
</script>
</body>
</html>
